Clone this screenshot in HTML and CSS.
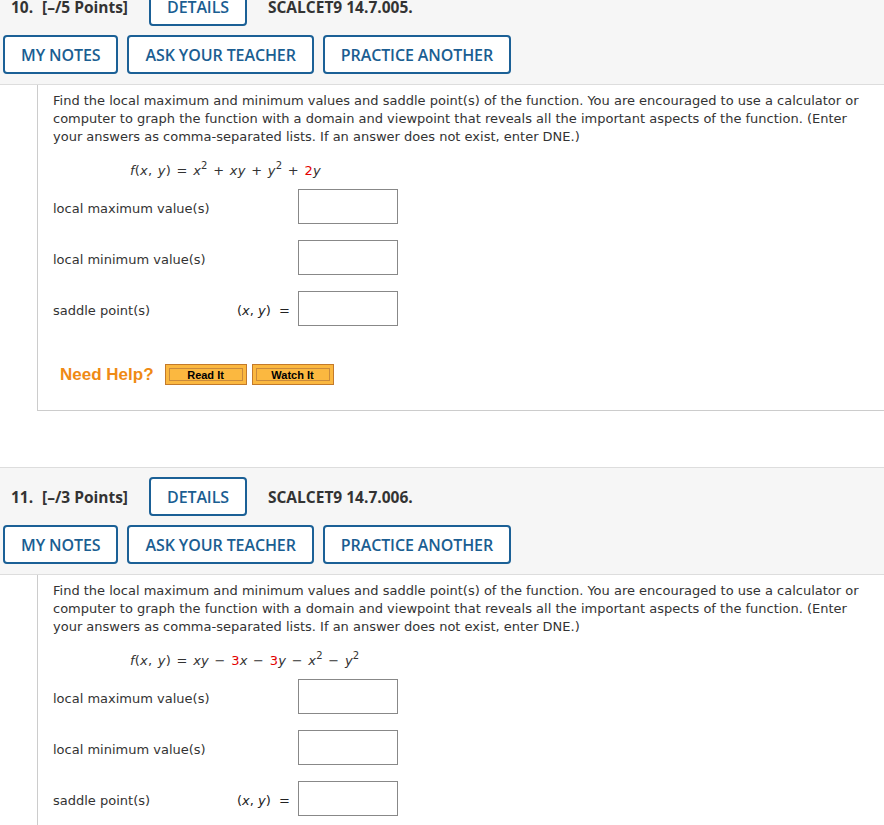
FILE: index.html
```html
<!DOCTYPE html>
<html lang="en">
<head>
    <meta charset="UTF-8">
    <meta name="viewport" content="width=device-width, initial-scale=1.0">
    <title>Assignment</title>
    <link rel="stylesheet" href="styles.css">
</head>
<body>
    <div class="question first">
        <div class="q-head">
            <div class="q-title">
                <span class="q-num">10.</span>
                <span class="q-points">[&ndash;/5 Points]</span>
                <button class="btn">DETAILS</button>
                <span class="q-code">SCALCET9 14.7.005.</span>
            </div>
            <div class="q-actions">
                <button class="btn">MY NOTES</button>
                <button class="btn">ASK YOUR TEACHER</button>
                <button class="btn">PRACTICE ANOTHER</button>
            </div>
        </div>
        <div class="q-body">
            <p class="q-text">Find the local maximum and minimum values and saddle point(s) of the function. You are encouraged to use a calculator or computer to graph the function with a domain and viewpoint that reveals all the important aspects of the function. (Enter your answers as comma-separated lists. If an answer does not exist, enter DNE.)</p>
            <div class="formula"><i>f</i>(<i>x</i>, <i>y</i>) = <i>x</i><sup>2</sup> + <i>xy</i> + <i>y</i><sup>2</sup> + <span class="red">2</span><i>y</i></div>
            <div class="answers">
                <div class="row"><span class="label">local maximum value(s)</span><span class="mid"></span><input class="box" type="text"></div>
                <div class="row"><span class="label">local minimum value(s)</span><span class="mid"></span><input class="box" type="text"></div>
                <div class="row"><span class="label">saddle point(s)</span><span class="mid">(<i>x</i>, <i>y</i>) &nbsp;=</span><input class="box" type="text"></div>
            </div>
            <div class="help">
                <span class="help-label">Need Help?</span>
                <button class="help-btn">Read It</button>
                <button class="help-btn">Watch It</button>
            </div>
        </div>
    </div>

    <div class="question">
        <div class="q-head">
            <div class="q-title">
                <span class="q-num">11.</span>
                <span class="q-points">[&ndash;/3 Points]</span>
                <button class="btn">DETAILS</button>
                <span class="q-code">SCALCET9 14.7.006.</span>
            </div>
            <div class="q-actions">
                <button class="btn">MY NOTES</button>
                <button class="btn">ASK YOUR TEACHER</button>
                <button class="btn">PRACTICE ANOTHER</button>
            </div>
        </div>
        <div class="q-body">
            <p class="q-text">Find the local maximum and minimum values and saddle point(s) of the function. You are encouraged to use a calculator or computer to graph the function with a domain and viewpoint that reveals all the important aspects of the function. (Enter your answers as comma-separated lists. If an answer does not exist, enter DNE.)</p>
            <div class="formula"><i>f</i>(<i>x</i>, <i>y</i>) = <i>xy</i> &minus; <span class="red">3</span><i>x</i> &minus; <span class="red">3</span><i>y</i> &minus; <i>x</i><sup>2</sup> &minus; <i>y</i><sup>2</sup></div>
            <div class="answers">
                <div class="row"><span class="label">local maximum value(s)</span><span class="mid"></span><input class="box" type="text"></div>
                <div class="row"><span class="label">local minimum value(s)</span><span class="mid"></span><input class="box" type="text"></div>
                <div class="row"><span class="label">saddle point(s)</span><span class="mid">(<i>x</i>, <i>y</i>) &nbsp;=</span><input class="box" type="text"></div>
            </div>
        </div>
    </div>
</body>
</html>
```

FILE: styles.css
```css
body {
    margin: 0;
    background: #fff;
    color: #333;
    font-family: "DejaVu Sans", Verdana, sans-serif;
    font-size: 13px;
    overflow: hidden;
}

.question.first {
    margin-top: -23px;
    margin-bottom: 56px;
}

.q-head {
    background: #f6f6f6;
    border-top: 1px solid #ddd;
    border-bottom: 1px solid #ddd;
    padding: 9px 0 10px 3px;
    font-family: "Open Sans", sans-serif;
}

.q-title {
    display: flex;
    align-items: center;
    height: 39px;
    margin-bottom: 9px;
}

.q-num {
    width: 31px;
    padding-left: 8px;
    font-weight: 700;
    font-size: 15.5px;
    color: #333;
}

.q-points {
    width: 107px;
    font-weight: 700;
    font-size: 15.5px;
    color: #333;
}

.q-code {
    margin-left: 21px;
    font-weight: 700;
    font-size: 15.5px;
    color: #333;
}

.q-actions {
    display: flex;
    gap: 9px;
}

.btn {
    height: 39px;
    padding: 0 16px;
    background: #fff;
    border: 2px solid #1b6096;
    border-radius: 4px;
    color: #1b5e92;
    font-family: "Open Sans", sans-serif;
    font-size: 16px;
    font-weight: 600;
    letter-spacing: -0.1px;
    cursor: pointer;
}

.q-body {
    margin-left: 37px;
    border-left: 1px solid #ccc;
    border-bottom: 1px solid #ccc;
    padding: 7px 9px 25px 15px;
}

.q-text {
    margin: 0;
    line-height: 18px;
}

.formula {
    margin: 16px 0 0 77px;
    line-height: 18px;
    word-spacing: 1.2px;
    letter-spacing: 0.2px;
}

.formula sup {
    font-size: 10px;
    line-height: 0;
    vertical-align: 6px;
}

.red {
    color: #e30000;
}

.answers {
    margin-top: 9px;
    display: flex;
    flex-direction: column;
    gap: 16px;
}

.row {
    display: flex;
    align-items: center;
}

.label {
    width: 180px;
    padding-top: 3px;
}

.mid {
    width: 57px;
    padding-top: 3px;
    text-align: right;
    color: #222;
}

.box {
    box-sizing: border-box;
    width: 100px;
    height: 35px;
    margin-left: 8px;
    border: 1px solid #888;
    background: #fff;
}

.help {
    display: flex;
    align-items: center;
    margin: 38px 0 0 7px;
}

.help-label {
    font-family: "Liberation Sans", Arial, sans-serif;
    font-weight: 700;
    font-size: 17px;
    color: #ef8a15;
    margin-right: 11px;
}

.help-btn {
    width: 82px;
    height: 21px;
    margin-right: 5px;
    padding: 0;
    background: #fbb840;
    border: 1px solid #c47a2a;
    box-shadow: inset 0 0 0 3px #fbb840, inset 0 0 0 4px #c98a3c;
    font-family: "Liberation Sans", Arial, sans-serif;
    font-weight: 700;
    font-size: 11px;
    color: #000;
    cursor: pointer;
}
```
